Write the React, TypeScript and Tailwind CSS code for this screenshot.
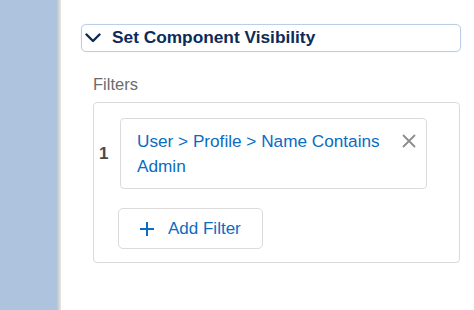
import React from "react";

export default function App() {
  return (
    <div className="flex w-[474px] h-[310px] bg-white overflow-hidden" style={{ fontFamily: '"Liberation Sans", Arial, sans-serif' }}>
      <div className="w-[57px] h-full bg-[#adc3de] shrink-0" />
      <div className="w-[4px] h-full shrink-0 bg-gradient-to-r from-[#c4c4c4] to-[#e6e6e6]" />
      <div className="flex-1 flex flex-col pl-[20px] pt-[24px]">
        <div className="w-[380px] h-[28px] rounded-[5px] border border-[#bccde6] shadow-[0_0_1px_#c9d7ec] flex items-center pl-[3px]">
          <svg width="16" height="10" viewBox="0 0 16 10">
            <path d="M1.5 1.5 L8 8 L14.5 1.5" fill="none" stroke="#0d2a52" strokeWidth="2.4" strokeLinecap="round" strokeLinejoin="round" />
          </svg>
          <span className="ml-[11px] text-[17.3px] font-bold text-[#0c2b57] leading-none">Set Component Visibility</span>
        </div>
        <div className="ml-[12px] mt-[22px] text-[16.5px] leading-[20px] text-[#6b6b6b]">Filters</div>
        <div className="ml-[12px] mt-[8px] w-[367px] h-[161px] rounded-[4px] border border-[#dddbda] flex flex-col">
          <div className="flex items-center mt-[15px]">
            <span className="ml-[5px] w-[21px] text-[17px] font-bold text-[#4a4a4a] leading-none">1</span>
            <div className="w-[307px] h-[71px] rounded-[4px] border border-[#dddbda] flex items-start pl-[16px] pr-[10px] pt-[10px]">
              <div className="w-[256px] text-[17.2px] leading-[24.5px] text-[#0a6cc2]">User &gt; Profile &gt; Name Contains Admin</div>
              <svg width="14" height="14" viewBox="0 0 14 14" className="ml-auto mt-[5px]">
                <path d="M1.5 1.5 L12.5 12.5 M12.5 1.5 L1.5 12.5" stroke="#8c8c8c" strokeWidth="1.8" strokeLinecap="round" />
              </svg>
            </div>
          </div>
          <div className="ml-[24px] mt-[19px] w-[145px] h-[41px] rounded-[5px] border border-[#dddbda] flex items-center pl-[21px]">
            <svg width="14" height="14" viewBox="0 0 14 14">
              <path d="M7 0.5 V13.5 M0.5 7 H13.5" stroke="#0a6cc2" strokeWidth="2" strokeLinecap="round" />
            </svg>
            <span className="ml-[14px] text-[17px] leading-none text-[#0a6cc2]">Add Filter</span>
          </div>
        </div>
      </div>
    </div>
  );
}
